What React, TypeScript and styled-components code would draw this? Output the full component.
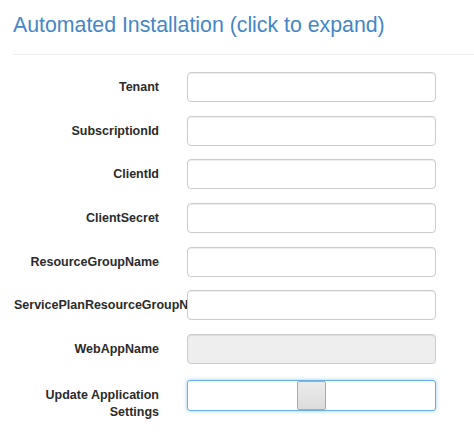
import React from 'react';
import styled, { createGlobalStyle } from 'styled-components';

const GlobalStyle = createGlobalStyle`
  body {
    margin: 0;
    background: #fff;
    font-family: "Liberation Sans", Arial, sans-serif;
    color: #333;
  }
`;

const Page = styled.div`
  padding: 13px 0 0 13px;
`;

const Heading = styled.h3`
  margin: 0;
  font-size: 21.3px;
  font-weight: normal;
  line-height: 24px;
  color: #4586c6;
  cursor: pointer;
`;

const Divider = styled.hr`
  margin: 17px 0 0;
  border: 0;
  border-top: 1px solid #eee;
`;

const Form = styled.form`
  display: grid;
  grid-template-columns: 145px 249px;
  column-gap: 28px;
  row-gap: 13.67px;
  padding: 17px 0 0 1px;
`;

const Label = styled.label`
  font-size: 12.5px;
  font-weight: bold;
  text-align: right;
  line-height: 17px;
  padding-top: 7px;
  white-space: nowrap;
  color: #2b2b2b;
`;

const WrapLabel = styled(Label)<{ $offset?: number }>`
  white-space: normal;
  margin-top: ${(p) => p.$offset ?? 0}px;
`;

const Field = styled.input`
  position: relative;
  box-sizing: border-box;
  height: 30px;
  width: 100%;
  margin: 0;
  padding: 4px 10px;
  font: inherit;
  background: ${(p) => (p.disabled ? '#eee' : '#fff')};
  border: 1px solid #ccc;
  border-radius: 4px;
  box-shadow: inset 0 1px 1px rgba(0, 0, 0, 0.075);
  outline: none;
`;

const Range = styled.input`
  box-sizing: border-box;
  -webkit-appearance: none;
  appearance: none;
  width: 100%;
  height: 31px;
  margin: 2px 0 0;
  padding: 0;
  background: #fff;
  border: 1px solid #66afe9;
  border-radius: 3px;
  box-shadow: 0 0 4px rgba(102, 175, 233, 0.6);
  outline: none;

  &::-webkit-slider-runnable-track {
    height: 29px;
    background: transparent;
  }

  &::-webkit-slider-thumb {
    -webkit-appearance: none;
    width: 29px;
    height: 29px;
    border: 1px solid #aaa;
    border-radius: 2px;
    background: linear-gradient(#ececec, #dcdcdc);
    box-sizing: border-box;
  }
`;

const fields = [
  { label: 'Tenant' },
  { label: 'SubscriptionId' },
  { label: 'ClientId' },
  { label: 'ClientSecret' },
  { label: 'ResourceGroupName' },
  { label: 'ServicePlanResourceGroupName' },
  { label: 'WebAppName', disabled: true },
];

export default function App() {
  return (
    <Page>
      <GlobalStyle />
      <Heading>Automated Installation (click to expand)</Heading>
      <Divider />
      <Form>
        {fields.map((f) => (
          <React.Fragment key={f.label}>
            <Label>{f.label}</Label>
            <Field type="text" disabled={f.disabled} />
          </React.Fragment>
        ))}
        <WrapLabel $offset={2}>Update Application Settings</WrapLabel>
        <Range type="range" min="0" max="100" defaultValue="50" />
      </Form>
    </Page>
  );
}
